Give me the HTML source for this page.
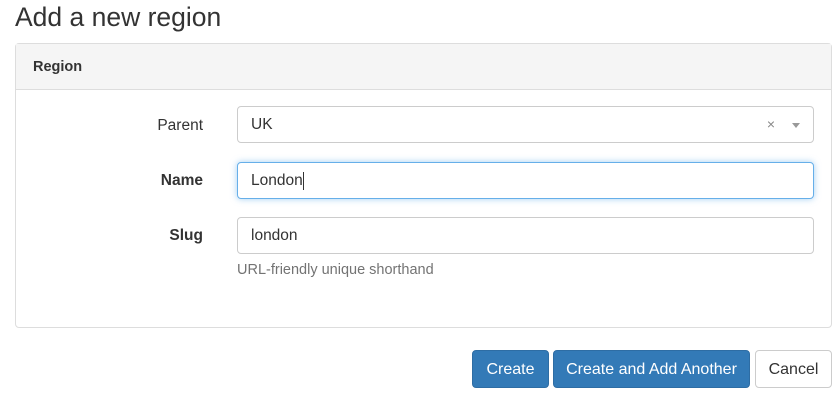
<!DOCTYPE html>
<html><head><style>
body{margin:0;background:#fff;font-family:"Liberation Sans",sans-serif;color:#333;width:840px;height:401px;overflow:hidden;position:relative}
h1{position:absolute;left:15px;top:2px;margin:0;font-size:26.5px;font-weight:normal;color:#333}
.panel{position:absolute;left:15px;top:43px;width:817px;height:285px;border:1px solid #ddd;border-radius:4px;box-sizing:border-box}
.ph{height:46px;background:#f5f5f5;border-bottom:1px solid #ddd;box-sizing:border-box;padding:0 17px;line-height:46px;font-weight:bold;font-size:14.5px}
.lbl{position:absolute;width:188px;text-align:right;font-size:15.5px;left:15px}
.inp{position:absolute;left:237px;width:577px;height:37px;border:1px solid #ccc;border-radius:4px;box-sizing:border-box;padding-left:13px;line-height:35px;font-size:15.5px;background:#fff}
.focus{border-color:#66afe9;box-shadow:0 0 7px rgba(102,175,233,.6)}
.help{position:absolute;left:237px;top:262px;font-size:14.5px;color:#737373}
.btn{position:absolute;top:350px;height:38px;line-height:38px;border-radius:4px;font-size:16px;text-align:center;box-sizing:border-box}
.pri{background:#337ab7;color:#fff;border:1px solid #2e6da4}
.def{background:#fff;color:#333;border:1px solid #ccc}
</style></head><body>
<h1>Add a new region</h1>
<div class="panel"><div class="ph">Region</div></div>
<div class="lbl" style="top:117px">Parent</div>
<div class="inp" style="top:106px">UK<span style="position:absolute;right:38px;color:#888;font-size:14px">×</span><span style="position:absolute;right:13px;top:16px;width:0;height:0;border-left:4px solid transparent;border-right:4px solid transparent;border-top:5px solid #999"></span></div>
<div class="lbl" style="top:172px;font-weight:bold">Name</div>
<div class="inp focus" style="top:162px">London<span style="display:inline-block;width:1px;height:18px;background:#333;vertical-align:middle"></span></div>
<div class="lbl" style="top:227px;font-weight:bold">Slug</div>
<div class="inp" style="top:217px">london</div>
<div class="help">URL-friendly unique shorthand</div>
<div class="btn pri" style="left:472px;width:77px">Create</div>
<div class="btn pri" style="left:553px;width:197px">Create and Add Another</div>
<div class="btn def" style="left:755px;width:77px">Cancel</div>
</body></html>
